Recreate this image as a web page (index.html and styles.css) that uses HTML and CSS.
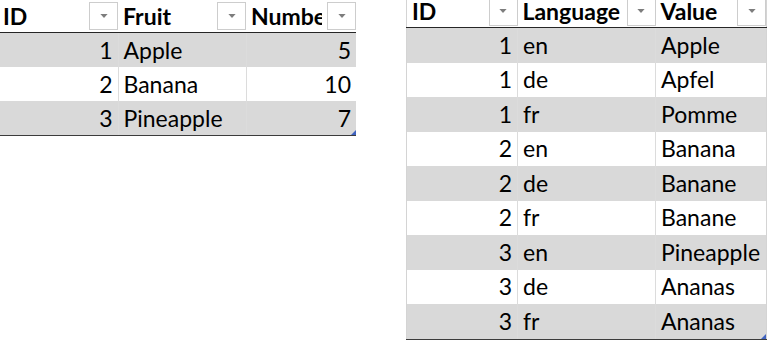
FILE: index.html
```html
<!DOCTYPE html>
<html lang="en">
<head>
<meta charset="utf-8">
<title>Tables</title>
<link rel="stylesheet" href="styles.css">
</head>
<body>
<div class="sheet">
  <table class="grid grid-fruit">
    <colgroup><col class="w120"><col class="w128"><col class="w110"></colgroup>
    <thead>
      <tr>
        <th><div class="hcell"><span class="hlabel">ID</span><span class="filter"><svg width="9" height="5" viewBox="0 0 9 5"><path d="M0 0H9L4.5 5Z"/></svg></span></div></th>
        <th><div class="hcell"><span class="hlabel">Fruit</span><span class="filter"><svg width="9" height="5" viewBox="0 0 9 5"><path d="M0 0H9L4.5 5Z"/></svg></span></div></th>
        <th><div class="hcell"><span class="hlabel">Number</span><span class="filter"><svg width="9" height="5" viewBox="0 0 9 5"><path d="M0 0H9L4.5 5Z"/></svg></span></div></th>
      </tr>
    </thead>
    <tbody>
      <tr><td class="num">1</td><td>Apple</td><td class="num">5</td></tr>
      <tr><td class="num">2</td><td>Banana</td><td class="num">10</td></tr>
      <tr><td class="num">3</td><td>Pineapple</td><td class="num last">7</td></tr>
    </tbody>
  </table>

  <table class="grid grid-lang">
    <colgroup><col class="w111"><col class="w138"><col class="w111"></colgroup>
    <thead>
      <tr>
        <th><div class="hcell"><span class="hlabel">ID</span><span class="filter"><svg width="9" height="5" viewBox="0 0 9 5"><path d="M0 0H9L4.5 5Z"/></svg></span></div></th>
        <th><div class="hcell"><span class="hlabel">Language</span><span class="filter"><svg width="9" height="5" viewBox="0 0 9 5"><path d="M0 0H9L4.5 5Z"/></svg></span></div></th>
        <th><div class="hcell"><span class="hlabel">Value</span><span class="filter"><svg width="9" height="5" viewBox="0 0 9 5"><path d="M0 0H9L4.5 5Z"/></svg></span></div></th>
      </tr>
    </thead>
    <tbody>
      <tr><td class="num">1</td><td>en</td><td>Apple</td></tr>
      <tr><td class="num">1</td><td>de</td><td>Apfel</td></tr>
      <tr><td class="num">1</td><td>fr</td><td>Pomme</td></tr>
      <tr><td class="num">2</td><td>en</td><td>Banana</td></tr>
      <tr><td class="num">2</td><td>de</td><td>Banane</td></tr>
      <tr><td class="num">2</td><td>fr</td><td>Banane</td></tr>
      <tr><td class="num">3</td><td>en</td><td>Pineapple</td></tr>
      <tr><td class="num">3</td><td>de</td><td>Ananas</td></tr>
      <tr><td class="num">3</td><td>fr</td><td class="last">Ananas</td></tr>
    </tbody>
  </table>
</div>
</body>
</html>
```

FILE: styles.css
```css
html, body {
  margin: 0;
  background: #ffffff;
}

body {
  font-family: Lato, "Liberation Sans", sans-serif;
  font-size: 23px;
  color: #000000;
  overflow: hidden;
}

.sheet {
  display: flex;
  align-items: flex-start;
  gap: 50px;
}

.grid {
  border-collapse: collapse;
  table-layout: fixed;
}

.grid-fruit {
  width: 358px;
  margin-left: -2px;
}

.grid-lang {
  width: 361px;
  border-left: 1px solid #d4d4d4;
  border-right: 1px solid #d4d4d4;
}

.w120 { width: 120px; }
.w128 { width: 128px; }
.w110 { width: 110px; }
.w111 { width: 111px; }
.w138 { width: 138px; }

.grid th,
.grid td {
  white-space: nowrap;
  overflow: hidden;
}

.grid thead th {
  padding: 0;
  background: #ffffff;
  font-weight: 700;
  text-align: left;
  border-bottom: 1px solid #262626;
}

.hcell {
  display: flex;
  align-items: flex-start;
  height: 32px;
}

.hlabel {
  flex: 1;
  min-width: 0;
  overflow: hidden;
  padding-left: 5px;
  margin-right: 5px;
  line-height: 32px;
  white-space: nowrap;
}

.filter {
  flex: none;
  width: 29px;
  height: 28px;
  margin-top: 2px;
  box-sizing: border-box;
  border: 1px solid #cdcdcd;
  background: #ffffff;
  display: flex;
  align-items: center;
  justify-content: center;
}

.filter svg {
  display: block;
  width: 8px;
  height: 4px;
  fill: #7d7d7d;
}

/* the right-hand sheet is scrolled a few pixels down: its header is cut at the top */
.grid-lang .hcell {
  height: 27px;
}

.grid-lang .hlabel {
  line-height: 22px;
  padding-bottom: 5px;
}

.grid-lang .filter {
  height: 26px;
  margin-top: 0;
  border-top: 0;
  align-items: flex-start;
  padding-top: 9px;
}

.grid tbody td {
  padding: 0 5px;
  line-height: 1;
  vertical-align: middle;
}

.grid-fruit tbody td {
  height: 34px;
}

.grid-lang tbody td {
  height: 34.5px;
}

.grid tbody tr:nth-child(odd) td {
  background: #d9d9d9;
}

.grid tbody td + td {
  border-left: 1px solid #dcdcdc;
}

.grid tbody tr:last-child td {
  border-bottom: 1px solid #3c3c3c;
}

.num {
  text-align: right;
}

.last {
  position: relative;
}

.last::after {
  content: "";
  position: absolute;
  right: 0;
  bottom: 0;
  width: 0;
  height: 0;
  border-style: solid;
  border-width: 0 0 5px 5px;
  border-color: transparent transparent #3f62c0 transparent;
}
```
